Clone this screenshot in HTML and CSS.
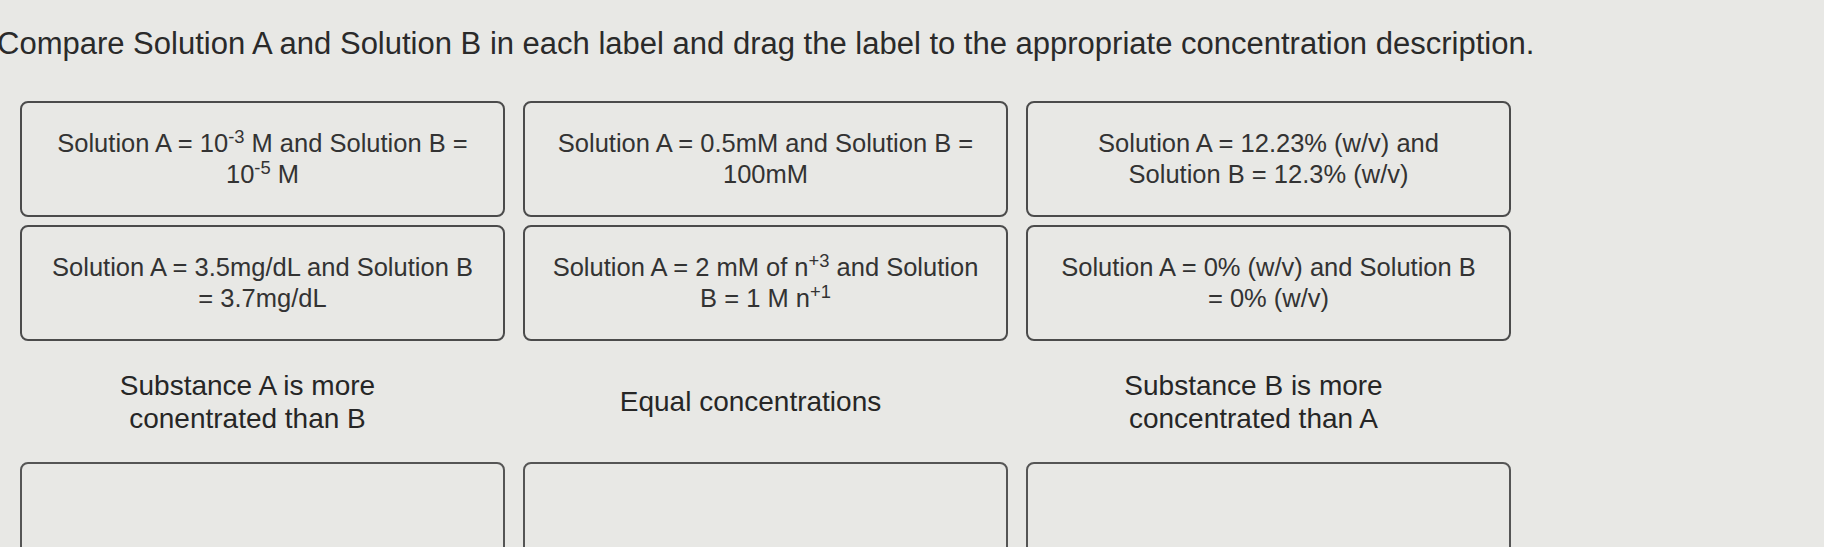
FILE: index.html
```html
<!DOCTYPE html>
<html lang="en">
<head>
    <meta charset="UTF-8">
    <meta name="viewport" content="width=device-width, initial-scale=1.0">
    <title>Concentration Labels</title>
    <link rel="stylesheet" href="styles.css">
</head>
<body>
    <p class="prompt">Compare Solution A and Solution B in each label and drag the label to the appropriate concentration description.</p>

    <div class="label-bank">
        <div class="label-card"><span>Solution A = 10<sup>-3</sup> M and Solution B =<br>10<sup>-5</sup> M</span></div>
        <div class="label-card"><span>Solution A = 0.5mM and Solution B =<br>100mM</span></div>
        <div class="label-card"><span>Solution A = 12.23% (w/v) and<br>Solution B = 12.3% (w/v)</span></div>
        <div class="label-card"><span>Solution A = 3.5mg/dL and Solution B<br>= 3.7mg/dL</span></div>
        <div class="label-card"><span>Solution A = 2 mM of n<sup>+3</sup> and Solution<br>B = 1 M n<sup>+1</sup></span></div>
        <div class="label-card"><span>Solution A = 0% (w/v) and Solution B<br>= 0% (w/v)</span></div>
    </div>

    <div class="targets">
        <div class="target-title"><span>Substance A is more<br>conentrated than B</span></div>
        <div class="target-title"><span>Equal concentrations</span></div>
        <div class="target-title"><span>Substance B is more<br>concentrated than A</span></div>
        <div class="drop-zone"></div>
        <div class="drop-zone"></div>
        <div class="drop-zone"></div>
    </div>
</body>
</html>
```

FILE: styles.css
```css
body {
    margin: 0;
    height: 547px;
    overflow: hidden;
    background-color: #e8e8e5;
    color: #363636;
    font-family: "Liberation Sans", Arial, sans-serif;
}

.prompt {
    margin: 0;
    padding-top: 26px;
    text-indent: -3px;
    font-size: 31px;
    line-height: 36px;
    color: #2a2a2a;
}

.label-bank {
    display: grid;
    grid-template-columns: repeat(3, 485px);
    grid-auto-rows: 116px;
    column-gap: 18px;
    row-gap: 8px;
    margin-top: 39px;
    padding-left: 20px;
}

.label-card {
    display: flex;
    align-items: center;
    justify-content: center;
    text-align: center;
    border: 2px solid #4b4b4b;
    border-radius: 8px;
    font-size: 25.5px;
    line-height: 31px;
    color: #333;
}

sup {
    font-size: 0.72em;
    line-height: 0;
}

.targets {
    display: grid;
    grid-template-columns: repeat(3, 485px);
    grid-template-rows: 121px 160px;
    column-gap: 18px;
    padding-left: 20px;
}

.target-title {
    display: flex;
    align-items: center;
    justify-content: center;
    text-align: center;
    padding-right: 30px;
    font-size: 28px;
    line-height: 33px;
    color: #262626;
}

.drop-zone {
    border: 2px solid #555;
    border-radius: 8px;
}
```
